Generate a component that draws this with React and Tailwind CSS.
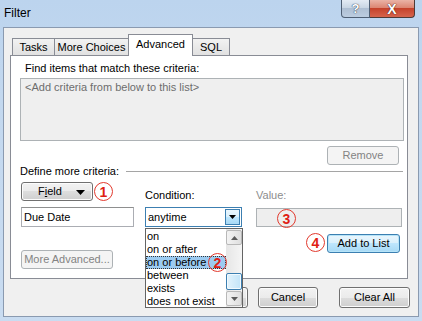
function Mark({ n, className }) {
  return (
    <div
      className={`absolute w-[19px] h-[19px] rounded-full border-[1.5px] border-[#e23a2e] flex items-center justify-center text-[#e01e14] font-bold text-[14px] leading-none ${className}`}
    >
      {n}
    </div>
  );
}

function Btn({ children, className = '', disabled = false, primary = false }) {
  const look = disabled
    ? 'border-[#adb2b5] bg-[#f4f4f4] text-[#838383]'
    : primary
    ? 'border-[#3c7fb1] bg-[linear-gradient(#eaf6fd_0%,#d9f0fc_50%,#bee6fd_50%,#a7d9f5_100%)] shadow-[inset_0_0_0_1px_#b6e4f8]'
    : 'border-[#707070] bg-[linear-gradient(#f2f2f2_0%,#ebebeb_50%,#dddddd_50%,#cfcfcf_100%)] shadow-[inset_0_0_0_1px_#fcfcfc]';
  return (
    <div className={`flex items-center justify-center whitespace-nowrap rounded-[3px] border leading-none ${look} ${className}`}>
      {children}
    </div>
  );
}

export default function App() {
  const items = ['on', 'on or after', 'on or before', 'between', 'exists', 'does not exist'];

  return (
    <div className="relative w-[422px] h-[321px] overflow-hidden flex flex-col bg-[linear-gradient(#bcd4ee,#c3d8ef_30%,#c9dcf1)] font-['Liberation_Sans',Arial,sans-serif] text-[11px] text-black">
      {/* title bar */}
      <div className="h-[27px] flex items-start justify-between">
        <div className="pl-[4px] pt-[6px] leading-[15px] text-[12px]">Filter</div>
        <div className="flex mr-[7px]">
          <div className="w-[29px] h-[18px] border border-[#4e5f74] border-t-0 rounded-bl-[4px] bg-[linear-gradient(#e3ebf4_0%,#c9d6e4_45%,#aebfd3_50%,#bccde0_100%)] flex items-center justify-center text-white font-bold text-[13px] leading-none [text-shadow:0_0_1px_#2c3a4d,0_0_1px_#2c3a4d]">
            ?
          </div>
          <div className="w-[45px] h-[18px] border border-[#4e3a36] border-t-0 border-l-0 rounded-br-[4px] bg-[linear-gradient(#eab3a6_0%,#dc8673_45%,#c5422b_50%,#d6644c_100%)] flex items-center justify-center text-white font-bold text-[14px] leading-none [text-shadow:0_0_1px_#4a1a10,0_0_1px_#4a1a10]">
            X
          </div>
        </div>
      </div>

      {/* client area */}
      <div className="mx-[3px] h-[290px] border border-[#8a9ab0] bg-[#f0f0f0] flex flex-col">
        {/* tabs */}
        <div className="mt-[6px] h-[21px] pl-[8px] flex items-end whitespace-nowrap">
          <div className="w-[43px] h-[17px] border border-[#898c95] border-b-0 bg-[linear-gradient(#f2f2f2,#e1e1e1)] flex items-center justify-center leading-none">
            Tasks
          </div>
          <div className="-ml-px w-[75px] h-[17px] border border-[#898c95] border-b-0 bg-[linear-gradient(#f2f2f2,#e1e1e1)] flex items-center justify-center leading-none">
            More Choices
          </div>
          <div className="relative z-10 -ml-px -mb-px w-[65px] h-[22px] border border-[#898c95] border-b-0 bg-white flex items-start justify-center pt-[4px] leading-none">
            Advanced
          </div>
          <div className="-ml-px w-[38px] h-[17px] border border-[#898c95] border-b-0 bg-[linear-gradient(#f2f2f2,#e1e1e1)] flex items-center justify-center leading-none">
            SQL
          </div>
        </div>

        {/* tab panel */}
        <div className="ml-[6px] w-[398px] h-[224px] border border-[#898c95] bg-white flex flex-col">
          <div className="ml-[14px] mt-[5px] leading-[15px]">Find items that match these criteria:</div>
          <div className="ml-[9px] mt-[2px] w-[384px] h-[63px] border border-[#adb2b5] bg-[#efefef] pl-[4px] pt-px leading-[15px] text-[#6d6d6d]">
            &lt;Add criteria from below to this list&gt;
          </div>
          <div className="flex justify-end pr-[8px] mt-[5px]">
            <Btn disabled className="w-[72px] h-[19px]">Remove</Btn>
          </div>

          <div className="flex items-center pl-[9px] h-[13px] leading-[13px]">
            <span>Define more criteria:</span>
            <div className="ml-[7px] mr-[4px] flex-1 h-px bg-[#a5a5a5]" />
          </div>

          <div className="flex pl-[9px] mt-[4px]">
            {/* left column */}
            <div className="w-[114px] flex flex-col">
              <Btn className="ml-px w-[72px] h-[19px] relative">
                <span className="-ml-[14px]">
                  F<span className="underline">i</span>eld
                </span>
                <svg className="absolute right-[7px] top-[7px]" width="9" height="5" viewBox="0 0 9 5">
                  <path d="M0 0h9L4.5 5z" fill="#000" />
                </svg>
              </Btn>
              <div className="ml-px mt-[6px] w-[113px] h-[20px] border border-[#abadb3] border-t-[#8e8f8f] bg-white pl-[2px] leading-[18px]">
                Due Date
              </div>
              <Btn disabled className="ml-px mt-[23px] w-[92px] h-[19px]">More Advanced...</Btn>
            </div>

            {/* middle column */}
            <div className="ml-[11px] w-[98px] flex flex-col">
              <div className="mt-[6px] leading-[15px]">Condition:</div>
              <div className="mt-[4px] w-[97px] h-[20px] border border-[#3c7fb1] bg-white flex items-center pl-[2px]">
                <span className="flex-1 leading-none">anytime</span>
                <div className="w-[15px] h-[16px] mr-px border border-[#3c7fb1] bg-[linear-gradient(#eaf6fd_0%,#d9f0fc_50%,#bee6fd_50%,#a7d9f5_100%)] flex items-center justify-center">
                  <svg width="7" height="4" viewBox="0 0 7 4">
                    <path d="M0 0h7L3.5 4z" fill="#000" />
                  </svg>
                </div>
              </div>
            </div>

            {/* right column */}
            <div className="ml-[13px] w-[146px] flex flex-col">
              <div className="mt-[6px] leading-[15px] text-[#8d8d8d]">Value:</div>
              <div className="mt-[5px] w-[146px] h-[19px] border border-[#adb2b5] bg-[#eeeeee]" />
              <Btn primary className="self-end mr-[2px] mt-[7px] w-[73px] h-[19px]">Add to List</Btn>
            </div>
          </div>
        </div>

        {/* dialog buttons */}
        <div className="flex justify-end pr-[8px] mt-[8px]">
          <Btn className="w-[71px] h-[21px] mr-[10px]">OK</Btn>
          <Btn className="w-[60px] h-[21px] mr-[21px]">Cancel</Btn>
          <Btn className="w-[71px] h-[21px]">Clear All</Btn>
        </div>
      </div>

      {/* open condition list */}
      <div className="absolute left-[145px] top-[228px] w-[98px] h-[80px] border border-[#646464] bg-white flex overflow-hidden">
        <div className="flex-1 flex flex-col pt-px">
          {items.map((t) => (
            <div
              key={t}
              className={`h-[13px] leading-[13px] pl-px whitespace-nowrap ${
                t === 'on or before' ? 'bg-[#9ccbf1] outline-1 outline-dotted outline-[#333] -outline-offset-1' : ''
              }`}
            >
              {t}
            </div>
          ))}
        </div>
        <div className="w-[16px] flex flex-col bg-[linear-gradient(90deg,#e6e6e6,#f5f5f5)]">
          <div className="mt-px h-[15px] rounded-[2px] border border-[#b8b8b8] bg-[linear-gradient(90deg,#f3f3f3,#dedede)] flex items-center justify-center">
            <svg width="7" height="4" viewBox="0 0 7 4">
              <path d="M0 4h7L3.5 0z" fill="#5a5a5a" />
            </svg>
          </div>
          <div className="flex-1" />
          <div className="h-[17px] rounded-[2px] border border-[#3c7fb1] bg-[linear-gradient(90deg,#e3f3fc,#c2e4f8)] shadow-[inset_0_0_0_1px_#f2fafe]" />
          <div className="mt-px mb-px h-[15px] rounded-[2px] border border-[#b8b8b8] bg-[linear-gradient(90deg,#f3f3f3,#dedede)] flex items-center justify-center">
            <svg width="7" height="4" viewBox="0 0 7 4">
              <path d="M0 0h7L3.5 4z" fill="#5a5a5a" />
            </svg>
          </div>
        </div>
      </div>

      {/* annotation marks */}
      <Mark n="1" className="left-[94px] top-[182px]" />
      <Mark n="2" className="left-[208px] top-[253px]" />
      <Mark n="3" className="left-[277px] top-[209px]" />
      <Mark n="4" className="left-[306px] top-[233px]" />
    </div>
  );
}
